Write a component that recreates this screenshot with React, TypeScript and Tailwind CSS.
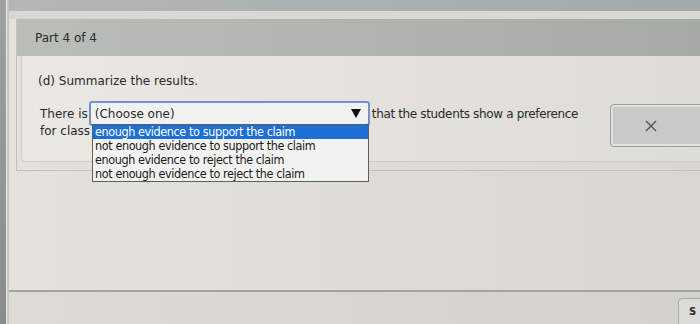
import React from 'react';

const options = [
  'enough evidence to support the claim',
  'not enough evidence to support the claim',
  'enough evidence to reject the claim',
  'not enough evidence to reject the claim',
];

export default function App() {
  return (
    <div
      className="flex h-[324px] w-[700px] overflow-hidden bg-gradient-to-r from-[#e3e2dd] to-[#d8d7d2] text-[12px] text-[#2a2a2a]"
      style={{ fontFamily: '"DejaVu Sans", Verdana, sans-serif' }}
    >
      {/* Left edge */}
      <div className="flex w-[9px] shrink-0">
        <div className="w-[6px] bg-gradient-to-b from-[#9fa1a0] to-[#8a8c8b]" />
        <div className="w-[1px] bg-[#eeede9]" />
        <div className="w-[2px] bg-[#c4c4c0]" />
      </div>

      <div className="flex min-w-0 flex-1 flex-col">
        {/* Top band */}
        <div className="h-[11px] shrink-0 bg-gradient-to-r from-[#b3b7b6] to-[#a3a9aa]" />
        <div className="h-[8px] shrink-0 bg-[#d9d8d3]" />

        {/* Question card */}
        <div className="ml-[7px] mr-[-10px] shrink-0 border-b border-l border-[#c2c2bd] pb-[8px]">
          <div className="flex h-[37px] items-center bg-gradient-to-r from-[#bbbdba] to-[#a6aaa7] pl-[18px]">
            Part 4 of 4
          </div>

          <div className="ml-[4px] rounded-bl-[4px] border-b border-l border-[#cfcec9] bg-gradient-to-r from-[#e9e8e3] to-[#dddcd7] pb-[14px] pl-[16px] pt-[15px]">
            <div className="h-[20px] leading-[20px]">(d) Summarize the results.</div>

            <div className="mt-[9px] flex items-start">
              <div className="relative pt-[1px]">
                <div className="flex items-center">
                  <span className="pl-[2px]">There is</span>
                  <div className="ml-[1px] flex h-[25px] w-[281px] items-center justify-between rounded-[3px] border-2 border-[#7191cf] bg-[#f1f1ef] pl-[4px] pr-[7px]">
                    <span>(Choose one)</span>
                    <svg width="10" height="9" viewBox="0 0 10 9">
                      <path d="M0 0 H10 L5 9 Z" fill="#111" />
                    </svg>
                  </div>
                  <span className="ml-[2px] tracking-[-0.35px]">that the students show a preference</span>
                </div>
                <div className="mt-[-2px] pl-[2px] leading-[15px]">for class</div>

                {/* Open dropdown list */}
                <div
                  className="absolute left-[54px] top-[24px] w-[277px] border border-[#5e5e5e] bg-[#f2f2f0] text-[12.5px] leading-[14px] tracking-[-0.4px]"
                  style={{ fontFamily: '"DejaVu Sans Condensed", "Liberation Sans", sans-serif' }}
                >
                  {options.map((o, i) => (
                    <div
                      key={o}
                      className={
                        i === 0
                          ? 'bg-[#1d6fd8] pl-[2px] text-white'
                          : 'pl-[2px] text-[#1a1a1a]'
                      }
                    >
                      {o}
                    </div>
                  ))}
                </div>
              </div>

              <div className="ml-auto mt-[4px] flex h-[43px] w-[100px] items-center rounded-[4px] border border-[#9c9d9a] bg-[#c9c9c5] pl-[34px] shadow-[inset_0_0_0_2px_#e2e2de]">
                <svg width="12" height="12" viewBox="0 0 12 12">
                  <path d="M1 1 L11 11 M11 1 L1 11" stroke="#555" strokeWidth="1.4" />
                </svg>
              </div>
            </div>
          </div>
        </div>

        <div className="flex-1" />

        {/* Bottom bar */}
        <div className="h-[2px] shrink-0 bg-[#a3a4a1]" />
        <div className="flex h-[32px] shrink-0 items-end justify-end bg-gradient-to-r from-[#dcdbd6] to-[#d2d1cc]">
          <div className="mr-[-14px] flex h-[26px] w-[36px] items-center rounded-tl-[5px] border-l border-t border-[#a9aaa6] bg-[#dcdcd8] pl-[10px] text-[10px] font-bold">
            S
          </div>
        </div>
      </div>
    </div>
  );
}
